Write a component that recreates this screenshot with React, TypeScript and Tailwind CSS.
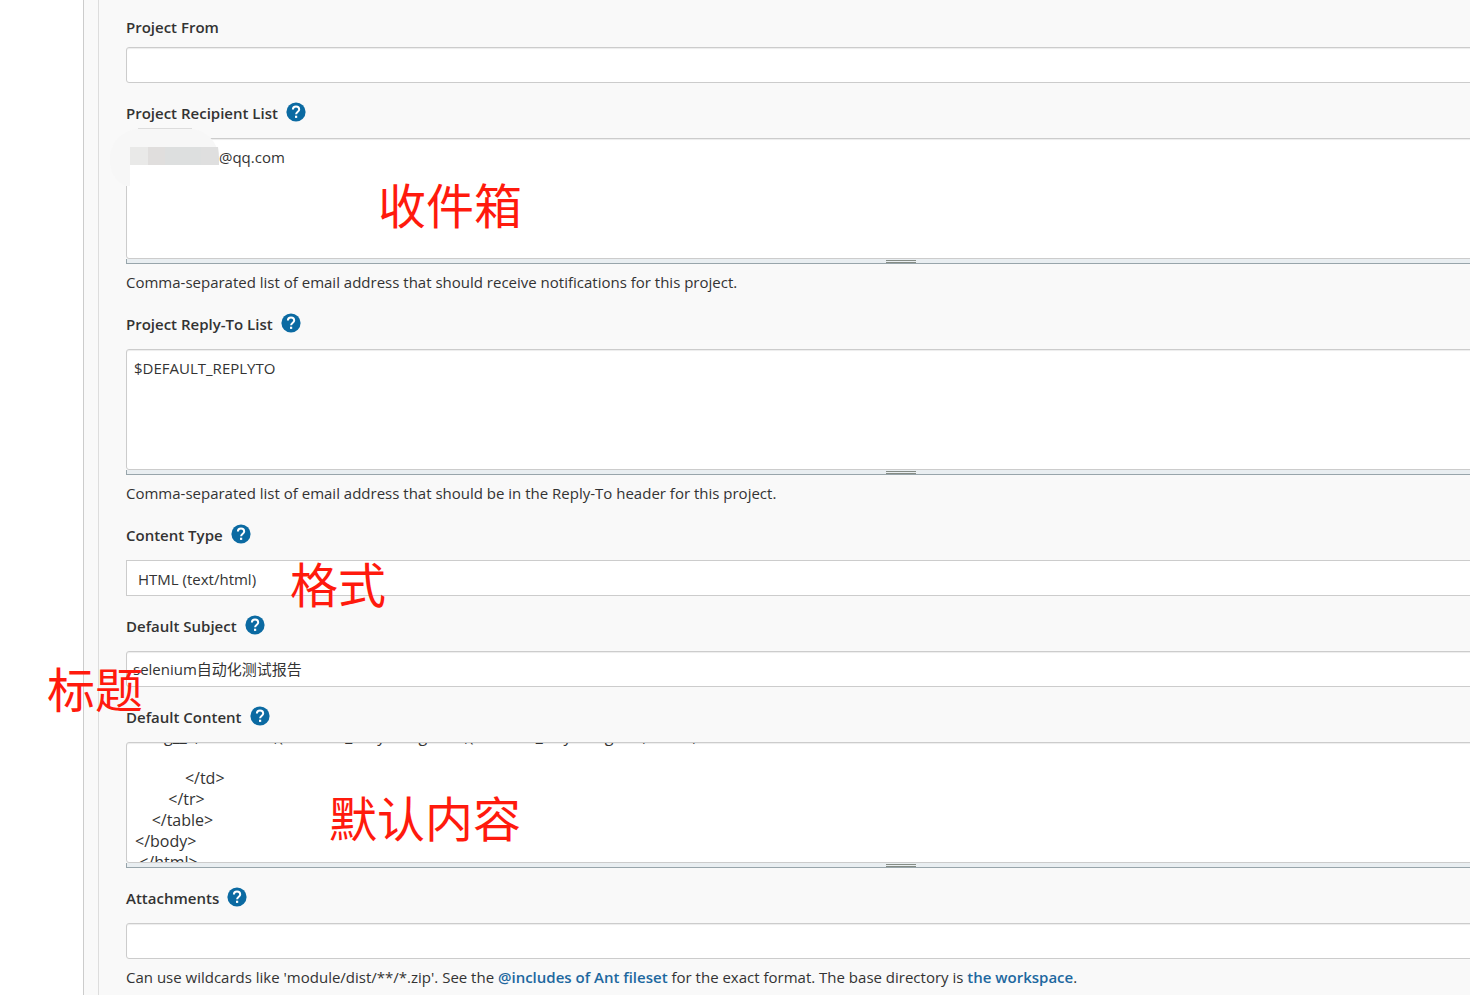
import { useLayoutEffect, useRef } from 'react';
import type { ReactNode } from 'react';

const boxClass =
  'block w-full rounded-[3px] border border-[#ccc] bg-white text-[#333] shadow-[inset_0_1px_1px_rgba(0,0,0,0.075)] outline-none focus:border-[#5c9fd6]';

const emailTemplate = `       g__  ,                  ,(               _      y        g         ,(               _     y        g       ,           ,

            </td>
        </tr>
    </table>
</body>
 </html>`;

const HelpButton = ({ name }: { name: string }) => (
  <button type="button" aria-label={`Help for ${name}`} className="-mt-0.5 ml-2 cursor-pointer">
    <svg viewBox="0 0 20 20" className="h-5 w-5">
      <circle cx="10" cy="10" r="9.6" fill="#0b6aa2" />
      <path
        d="M6.9 7.6C6.9 5.7 8.2 4.6 10 4.6s3.2 1.1 3.2 2.8c0 2.2-3.1 2.4-3.1 4.9"
        fill="none"
        stroke="#fff"
        strokeWidth="2"
      />
      <rect x="9" y="13.7" width="2.2" height="2.2" fill="#fff" />
    </svg>
  </button>
);

interface FieldProps {
  id: string;
  label: string;
  help?: boolean;
  note?: ReactNode;
  children: ReactNode;
}

const Field = ({ id, label, help = true, note, children }: FieldProps) => (
  <div className="mb-5">
    <div className={`flex h-5 items-center ${help ? 'mb-[15px]' : 'mb-2.5'}`}>
      <label htmlFor={id} className="font-semibold">
        {label}
      </label>
      {help && <HelpButton name={label} />}
    </div>
    {children}
    {note && <p className="mt-2 mb-[22px] leading-5">{note}</p>}
  </div>
);

const ResizeHandle = () => (
  <div className="flex h-[5px] cursor-s-resize justify-center border-b border-l border-[#98a5ab] bg-[#e9eef1]">
    <span className="mt-px h-[3px] w-[30px] border-y border-[#858c85]" />
  </div>
);

interface AreaProps {
  id: string;
  value: string;
  className?: string;
  scroll?: number;
}

const Area = ({ id, value, className = 'pl-[7px]', scroll = 0 }: AreaProps) => {
  const ref = useRef<HTMLTextAreaElement>(null);

  useLayoutEffect(() => {
    if (ref.current) ref.current.scrollTop = scroll;
  }, [scroll]);

  return (
    <>
      <textarea
        ref={ref}
        id={id}
        defaultValue={value}
        spellCheck={false}
        className={`${boxClass} h-[121px] resize-none overflow-hidden py-2 leading-[21px] ${className}`}
      />
      <ResizeHandle />
    </>
  );
};

const Mark = ({ text, className }: { text: string; className: string }) => (
  <span
    className={`pointer-events-none absolute font-['Noto_Sans_CJK_SC',sans-serif] text-[48px] leading-[48px] whitespace-nowrap text-[#ff1a0d] ${className}`}
  >
    {text}
  </span>
);

// Covers the mailbox name in the recipient list
const Redaction = () => (
  <svg className="pointer-events-none absolute -top-3 -left-4 h-[62px] w-[112px]" viewBox="0 0 112 62">
    <path d="M0 34C0 16 12 2 36 2h38c22 0 35 14 35 32v4H20v22h-4C6 56 0 46 0 34Z" fill="#f7f7f7" />
    <path d="M28 2.5h54" stroke="#dcdcdc" />
    <path d="M20 21h18v18H20z" fill="#e9e9e8" />
    <path d="M38 21h17v18H38z" fill="#e0dedd" />
    <path d="M55 21h36v18H55z" fill="#dddfdf" />
    <path d="M91 21h17q1 6 1 12v6H91z" fill="#dfdfdf" />
  </svg>
);

export default function App() {
  return (
    <div className="h-screen overflow-hidden bg-white pl-[83px] font-['Open_Sans','Noto_Sans_CJK_SC',sans-serif] text-[15px] text-[#333]">
      <main className="min-h-full border-l border-[#ccc] bg-[#f9f9f9] pl-3.5">
        <form className="-mr-[204px] min-h-screen border-l border-[#ddd] pt-[17px] pl-[27px]">
          <Field id="from" label="Project From" help={false}>
            <input id="from" type="text" className={`${boxClass} h-9 px-1.5`} />
          </Field>

          <Field
            id="recipients"
            label="Project Recipient List"
            note="Comma-separated list of email address that should receive notifications for this project."
          >
            <div className="relative">
              <Area id="recipients" value="@qq.com" className="pl-[92px]" />
              <Redaction />
              <Mark text="收件箱" className="top-[41px] left-[252px]" />
            </div>
          </Field>

          <Field
            id="reply-to"
            label="Project Reply-To List"
            note="Comma-separated list of email address that should be in the Reply-To header for this project."
          >
            <Area id="reply-to" value="$DEFAULT_REPLYTO" />
          </Field>

          <Field id="content-type" label="Content Type">
            <div className="relative">
              <select
                id="content-type"
                className="block h-9 w-full appearance-none border border-[#ccc] bg-white px-[11px] pt-0.5 outline-none"
              >
                <option>HTML (text/html)</option>
              </select>
              <Mark text="格式" className="-top-0.5 left-[164px]" />
            </div>
          </Field>

          <Field id="subject" label="Default Subject">
            <div className="relative">
              <input
                id="subject"
                type="text"
                defaultValue="selenium自动化测试报告"
                className={`${boxClass} h-9 px-1.5 pb-0.5`}
              />
              <Mark text="标题" className="top-3 -left-[79px]" />
            </div>
          </Field>

          <Field id="content" label="Default Content">
            <div className="relative">
              <Area id="content" value={emailTemplate} scroll={25} className="pl-2 text-[16px]" />
              <Mark text="默认内容" className="top-[50px] left-[203px]" />
            </div>
          </Field>

          <Field
            id="attachments"
            label="Attachments"
            note={
              <>
                Can use wildcards like 'module/dist/**/*.zip'. See the{' '}
                <a href="#fileset" className="font-semibold text-[#1d689f]">
                  @includes of Ant fileset
                </a>{' '}
                for the exact format. The base directory is{' '}
                <a href="#workspace" className="font-semibold text-[#1d689f]">
                  the workspace
                </a>
                .
              </>
            }
          >
            <input id="attachments" type="text" className={`${boxClass} h-9 px-1.5`} />
          </Field>
        </form>
      </main>
    </div>
  );
}
